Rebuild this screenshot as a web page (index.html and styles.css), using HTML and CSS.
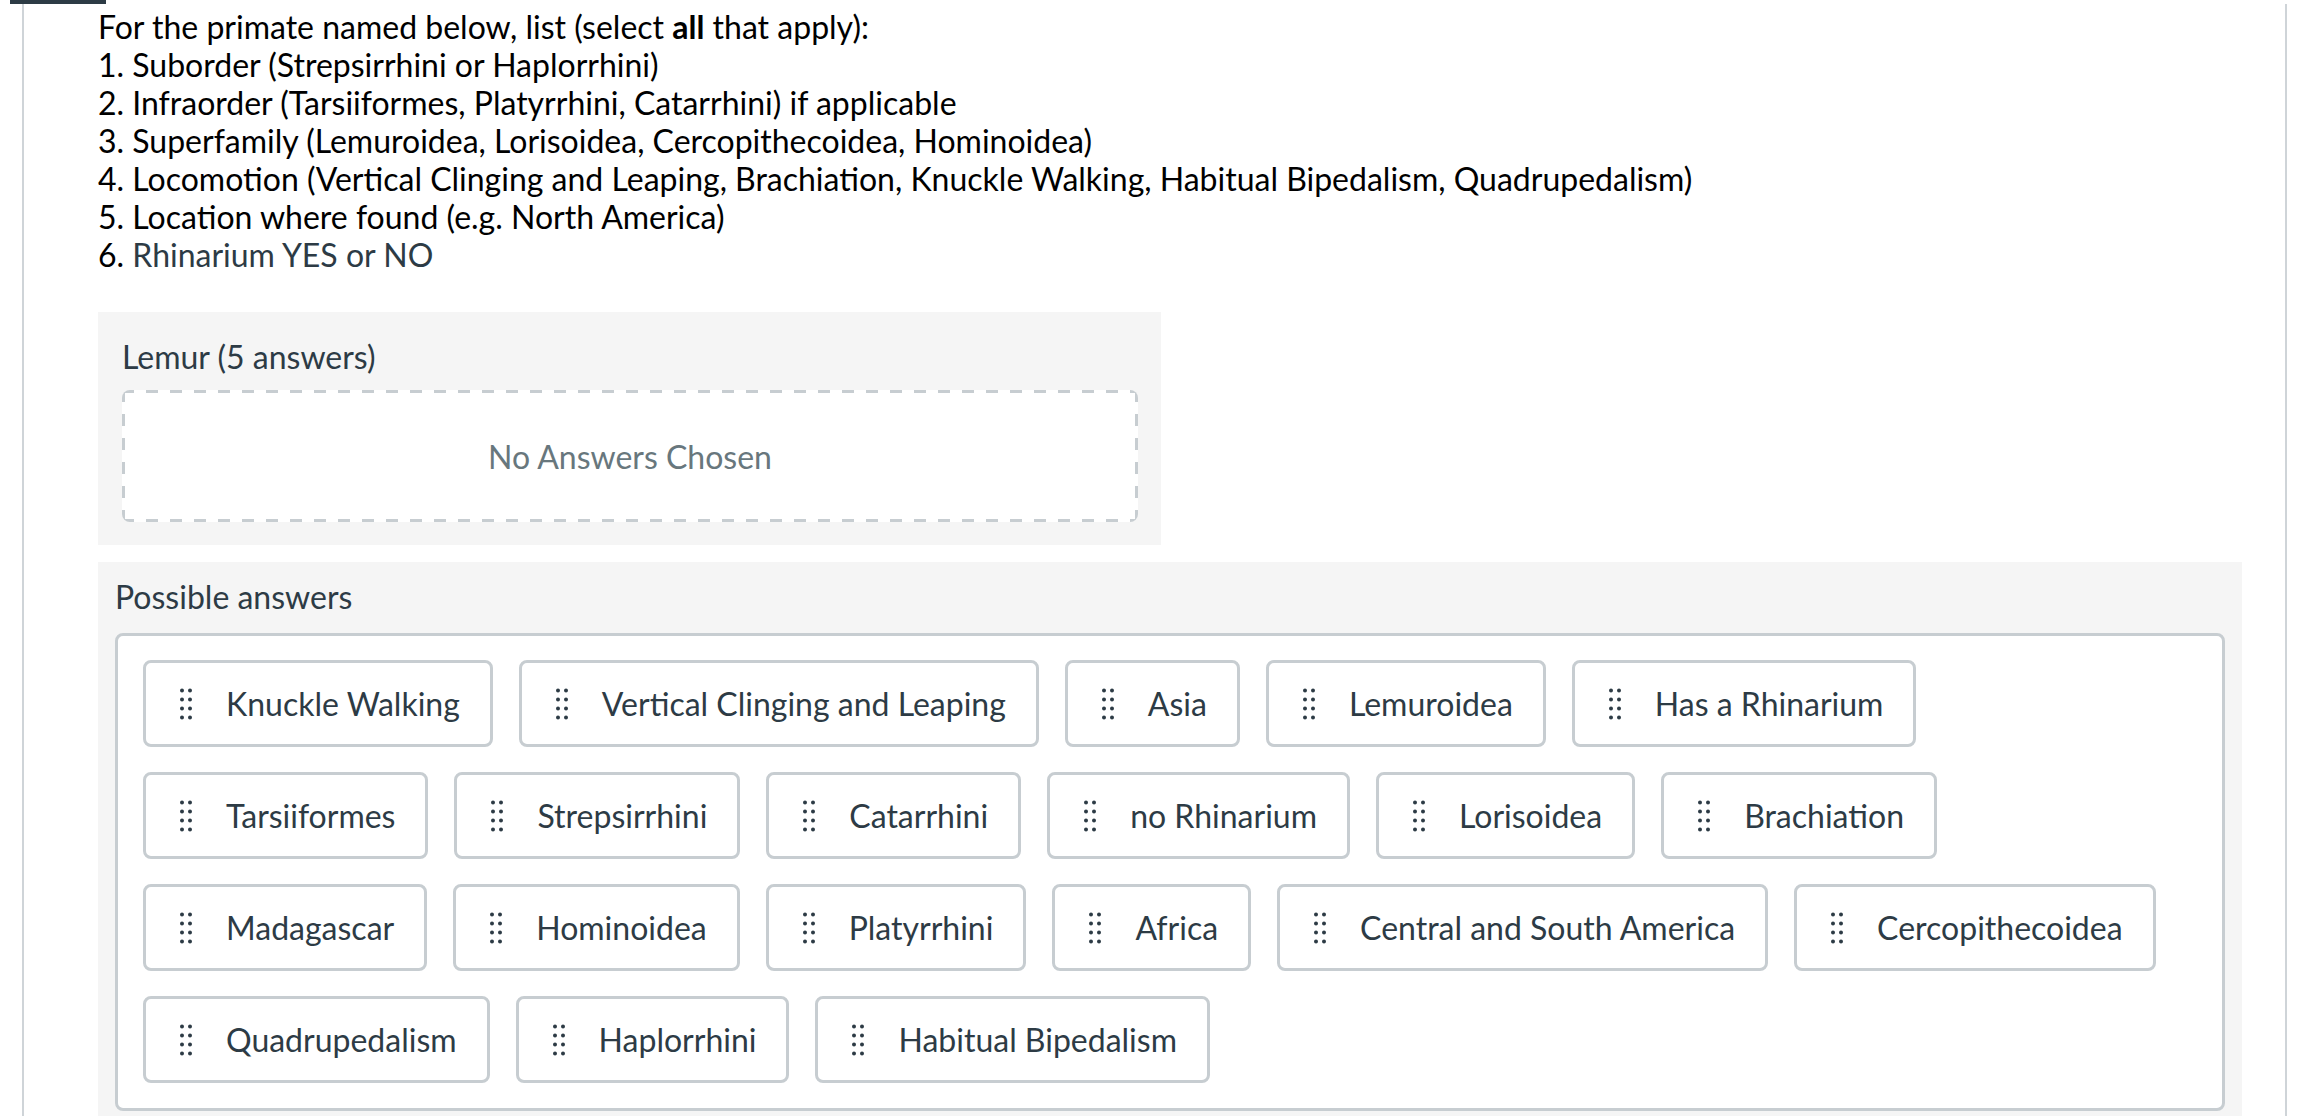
FILE: index.html
```html
<!DOCTYPE html>
<html lang="en">
<head>
<meta charset="utf-8">
<title>Primate question</title>
<link rel="stylesheet" href="styles.css">
</head>
<body>
<div class="tab"></div>
<div class="card">
  <div class="prompt">
    <div class="line">For the primate named below, list (select <strong>all</strong> that apply):</div>
    <div class="line">1. Suborder (Strepsirrhini or Haplorrhini)</div>
    <div class="line">2. Infraorder (Tarsiiformes, Platyrrhini, Catarrhini) if applicable</div>
    <div class="line">3. Superfamily (Lemuroidea, Lorisoidea, Cercopithecoidea, Hominoidea)</div>
    <div class="line">4. Locomotion (Vertical Clinging and Leaping, Brachiation, Knuckle Walking, Habitual Bipedalism, Quadrupedalism)</div>
    <div class="line">5. Location where found (e.g. North America)</div>
    <div class="line">6. <span class="muted">Rhinarium YES or NO</span></div>
  </div>

  <div class="blank">
    <div class="blank-title">Lemur (5 answers)</div>
    <div class="dropzone">No Answers Chosen</div>
  </div>

  <div class="bank">
    <div class="bank-title">Possible answers</div>
    <div class="pool">
      <div class="chip"><svg class="handle" viewBox="0 0 12 32" width="12" height="32"><circle cx="2" cy="2.5" r="2"/><circle cx="10" cy="2.5" r="2"/><circle cx="2" cy="11.5" r="2"/><circle cx="10" cy="11.5" r="2"/><circle cx="2" cy="20.5" r="2"/><circle cx="10" cy="20.5" r="2"/><circle cx="2" cy="29.5" r="2"/><circle cx="10" cy="29.5" r="2"/></svg><span>Knuckle Walking</span></div>
      <div class="chip"><svg class="handle" viewBox="0 0 12 32" width="12" height="32"><circle cx="2" cy="2.5" r="2"/><circle cx="10" cy="2.5" r="2"/><circle cx="2" cy="11.5" r="2"/><circle cx="10" cy="11.5" r="2"/><circle cx="2" cy="20.5" r="2"/><circle cx="10" cy="20.5" r="2"/><circle cx="2" cy="29.5" r="2"/><circle cx="10" cy="29.5" r="2"/></svg><span>Vertical Clinging and Leaping</span></div>
      <div class="chip"><svg class="handle" viewBox="0 0 12 32" width="12" height="32"><circle cx="2" cy="2.5" r="2"/><circle cx="10" cy="2.5" r="2"/><circle cx="2" cy="11.5" r="2"/><circle cx="10" cy="11.5" r="2"/><circle cx="2" cy="20.5" r="2"/><circle cx="10" cy="20.5" r="2"/><circle cx="2" cy="29.5" r="2"/><circle cx="10" cy="29.5" r="2"/></svg><span>Asia</span></div>
      <div class="chip"><svg class="handle" viewBox="0 0 12 32" width="12" height="32"><circle cx="2" cy="2.5" r="2"/><circle cx="10" cy="2.5" r="2"/><circle cx="2" cy="11.5" r="2"/><circle cx="10" cy="11.5" r="2"/><circle cx="2" cy="20.5" r="2"/><circle cx="10" cy="20.5" r="2"/><circle cx="2" cy="29.5" r="2"/><circle cx="10" cy="29.5" r="2"/></svg><span>Lemuroidea</span></div>
      <div class="chip"><svg class="handle" viewBox="0 0 12 32" width="12" height="32"><circle cx="2" cy="2.5" r="2"/><circle cx="10" cy="2.5" r="2"/><circle cx="2" cy="11.5" r="2"/><circle cx="10" cy="11.5" r="2"/><circle cx="2" cy="20.5" r="2"/><circle cx="10" cy="20.5" r="2"/><circle cx="2" cy="29.5" r="2"/><circle cx="10" cy="29.5" r="2"/></svg><span>Has a Rhinarium</span></div>
      <div class="chip"><svg class="handle" viewBox="0 0 12 32" width="12" height="32"><circle cx="2" cy="2.5" r="2"/><circle cx="10" cy="2.5" r="2"/><circle cx="2" cy="11.5" r="2"/><circle cx="10" cy="11.5" r="2"/><circle cx="2" cy="20.5" r="2"/><circle cx="10" cy="20.5" r="2"/><circle cx="2" cy="29.5" r="2"/><circle cx="10" cy="29.5" r="2"/></svg><span>Tarsiiformes</span></div>
      <div class="chip"><svg class="handle" viewBox="0 0 12 32" width="12" height="32"><circle cx="2" cy="2.5" r="2"/><circle cx="10" cy="2.5" r="2"/><circle cx="2" cy="11.5" r="2"/><circle cx="10" cy="11.5" r="2"/><circle cx="2" cy="20.5" r="2"/><circle cx="10" cy="20.5" r="2"/><circle cx="2" cy="29.5" r="2"/><circle cx="10" cy="29.5" r="2"/></svg><span>Strepsirrhini</span></div>
      <div class="chip"><svg class="handle" viewBox="0 0 12 32" width="12" height="32"><circle cx="2" cy="2.5" r="2"/><circle cx="10" cy="2.5" r="2"/><circle cx="2" cy="11.5" r="2"/><circle cx="10" cy="11.5" r="2"/><circle cx="2" cy="20.5" r="2"/><circle cx="10" cy="20.5" r="2"/><circle cx="2" cy="29.5" r="2"/><circle cx="10" cy="29.5" r="2"/></svg><span>Catarrhini</span></div>
      <div class="chip"><svg class="handle" viewBox="0 0 12 32" width="12" height="32"><circle cx="2" cy="2.5" r="2"/><circle cx="10" cy="2.5" r="2"/><circle cx="2" cy="11.5" r="2"/><circle cx="10" cy="11.5" r="2"/><circle cx="2" cy="20.5" r="2"/><circle cx="10" cy="20.5" r="2"/><circle cx="2" cy="29.5" r="2"/><circle cx="10" cy="29.5" r="2"/></svg><span>no Rhinarium</span></div>
      <div class="chip"><svg class="handle" viewBox="0 0 12 32" width="12" height="32"><circle cx="2" cy="2.5" r="2"/><circle cx="10" cy="2.5" r="2"/><circle cx="2" cy="11.5" r="2"/><circle cx="10" cy="11.5" r="2"/><circle cx="2" cy="20.5" r="2"/><circle cx="10" cy="20.5" r="2"/><circle cx="2" cy="29.5" r="2"/><circle cx="10" cy="29.5" r="2"/></svg><span>Lorisoidea</span></div>
      <div class="chip"><svg class="handle" viewBox="0 0 12 32" width="12" height="32"><circle cx="2" cy="2.5" r="2"/><circle cx="10" cy="2.5" r="2"/><circle cx="2" cy="11.5" r="2"/><circle cx="10" cy="11.5" r="2"/><circle cx="2" cy="20.5" r="2"/><circle cx="10" cy="20.5" r="2"/><circle cx="2" cy="29.5" r="2"/><circle cx="10" cy="29.5" r="2"/></svg><span>Brachiation</span></div>
      <div class="chip"><svg class="handle" viewBox="0 0 12 32" width="12" height="32"><circle cx="2" cy="2.5" r="2"/><circle cx="10" cy="2.5" r="2"/><circle cx="2" cy="11.5" r="2"/><circle cx="10" cy="11.5" r="2"/><circle cx="2" cy="20.5" r="2"/><circle cx="10" cy="20.5" r="2"/><circle cx="2" cy="29.5" r="2"/><circle cx="10" cy="29.5" r="2"/></svg><span>Madagascar</span></div>
      <div class="chip"><svg class="handle" viewBox="0 0 12 32" width="12" height="32"><circle cx="2" cy="2.5" r="2"/><circle cx="10" cy="2.5" r="2"/><circle cx="2" cy="11.5" r="2"/><circle cx="10" cy="11.5" r="2"/><circle cx="2" cy="20.5" r="2"/><circle cx="10" cy="20.5" r="2"/><circle cx="2" cy="29.5" r="2"/><circle cx="10" cy="29.5" r="2"/></svg><span>Hominoidea</span></div>
      <div class="chip"><svg class="handle" viewBox="0 0 12 32" width="12" height="32"><circle cx="2" cy="2.5" r="2"/><circle cx="10" cy="2.5" r="2"/><circle cx="2" cy="11.5" r="2"/><circle cx="10" cy="11.5" r="2"/><circle cx="2" cy="20.5" r="2"/><circle cx="10" cy="20.5" r="2"/><circle cx="2" cy="29.5" r="2"/><circle cx="10" cy="29.5" r="2"/></svg><span>Platyrrhini</span></div>
      <div class="chip"><svg class="handle" viewBox="0 0 12 32" width="12" height="32"><circle cx="2" cy="2.5" r="2"/><circle cx="10" cy="2.5" r="2"/><circle cx="2" cy="11.5" r="2"/><circle cx="10" cy="11.5" r="2"/><circle cx="2" cy="20.5" r="2"/><circle cx="10" cy="20.5" r="2"/><circle cx="2" cy="29.5" r="2"/><circle cx="10" cy="29.5" r="2"/></svg><span>Africa</span></div>
      <div class="chip"><svg class="handle" viewBox="0 0 12 32" width="12" height="32"><circle cx="2" cy="2.5" r="2"/><circle cx="10" cy="2.5" r="2"/><circle cx="2" cy="11.5" r="2"/><circle cx="10" cy="11.5" r="2"/><circle cx="2" cy="20.5" r="2"/><circle cx="10" cy="20.5" r="2"/><circle cx="2" cy="29.5" r="2"/><circle cx="10" cy="29.5" r="2"/></svg><span>Central and South America</span></div>
      <div class="chip"><svg class="handle" viewBox="0 0 12 32" width="12" height="32"><circle cx="2" cy="2.5" r="2"/><circle cx="10" cy="2.5" r="2"/><circle cx="2" cy="11.5" r="2"/><circle cx="10" cy="11.5" r="2"/><circle cx="2" cy="20.5" r="2"/><circle cx="10" cy="20.5" r="2"/><circle cx="2" cy="29.5" r="2"/><circle cx="10" cy="29.5" r="2"/></svg><span>Cercopithecoidea</span></div>
      <div class="chip"><svg class="handle" viewBox="0 0 12 32" width="12" height="32"><circle cx="2" cy="2.5" r="2"/><circle cx="10" cy="2.5" r="2"/><circle cx="2" cy="11.5" r="2"/><circle cx="10" cy="11.5" r="2"/><circle cx="2" cy="20.5" r="2"/><circle cx="10" cy="20.5" r="2"/><circle cx="2" cy="29.5" r="2"/><circle cx="10" cy="29.5" r="2"/></svg><span>Quadrupedalism</span></div>
      <div class="chip"><svg class="handle" viewBox="0 0 12 32" width="12" height="32"><circle cx="2" cy="2.5" r="2"/><circle cx="10" cy="2.5" r="2"/><circle cx="2" cy="11.5" r="2"/><circle cx="10" cy="11.5" r="2"/><circle cx="2" cy="20.5" r="2"/><circle cx="10" cy="20.5" r="2"/><circle cx="2" cy="29.5" r="2"/><circle cx="10" cy="29.5" r="2"/></svg><span>Haplorrhini</span></div>
      <div class="chip"><svg class="handle" viewBox="0 0 12 32" width="12" height="32"><circle cx="2" cy="2.5" r="2"/><circle cx="10" cy="2.5" r="2"/><circle cx="2" cy="11.5" r="2"/><circle cx="10" cy="11.5" r="2"/><circle cx="2" cy="20.5" r="2"/><circle cx="10" cy="20.5" r="2"/><circle cx="2" cy="29.5" r="2"/><circle cx="10" cy="29.5" r="2"/></svg><span>Habitual Bipedalism</span></div>
    </div>
  </div>
</div>
</body>
</html>
```

FILE: styles.css
```css
html, body {
  margin: 0;
  padding: 0;
  background: #ffffff;
}

body {
  font-family: Lato, "Noto Sans", "Liberation Sans", sans-serif;
  font-size: 32px;
  color: #000000;
  overflow: hidden;
}

.tab {
  width: 96px;
  height: 4px;
  margin-left: 10px;
  background: #2d3b45;
}

.card {
  margin-left: 22px;
  margin-right: 17px;
  border-left: 2px solid #cfd4d8;
  border-right: 2px solid #cfd4d8;
  padding: 4px 43px 0 74px;
  min-height: 1112px;
  box-sizing: border-box;
}

.prompt .line {
  line-height: 38px;
}

.prompt strong {
  font-weight: 700;
}

.muted {
  color: #2d3b45;
}

.blank {
  width: 1063px;
  box-sizing: border-box;
  margin-top: 38px;
  background: #f5f5f5;
  padding: 24px 23px 23px 24px;
  color: #2d3b45;
}

.blank-title {
  line-height: 42px;
  margin-bottom: 12px;
}

.dropzone {
  height: 132px;
  box-sizing: border-box;
  border-radius: 8px;
  background-color: #ffffff;
  background-image:
    repeating-linear-gradient(90deg, #c7cdd1 0 12px, transparent 12px 24px),
    repeating-linear-gradient(90deg, #c7cdd1 0 12px, transparent 12px 24px),
    repeating-linear-gradient(180deg, #c7cdd1 0 12px, transparent 12px 24px),
    repeating-linear-gradient(180deg, #c7cdd1 0 12px, transparent 12px 24px);
  background-size: 100% 3px, 100% 3px, 3px 100%, 3px 100%;
  background-position: left top, left bottom, left top, right top;
  background-repeat: no-repeat;
  display: flex;
  align-items: center;
  justify-content: center;
  color: #68777d;
}

.bank {
  margin-top: 17px;
  background: #f5f5f5;
  padding: 14px 17px 40px 17px;
  color: #2d3b45;
}

.bank-title {
  line-height: 42px;
  margin-bottom: 15px;
}

.pool {
  border: 3px solid #c7cdd1;
  border-radius: 8px;
  background: #ffffff;
  padding: 24px 25px 25px 25px;
  display: flex;
  flex-wrap: wrap;
  column-gap: 26px;
  row-gap: 25px;
}

.chip {
  height: 87px;
  box-sizing: border-box;
  border: 3px solid #c7cdd1;
  border-radius: 8px;
  background: #ffffff;
  display: flex;
  align-items: center;
  padding: 0 30px 0 34px;
  white-space: nowrap;
}

.handle {
  flex: none;
  fill: #2d3b45;
  margin-right: 34px;
}
```
